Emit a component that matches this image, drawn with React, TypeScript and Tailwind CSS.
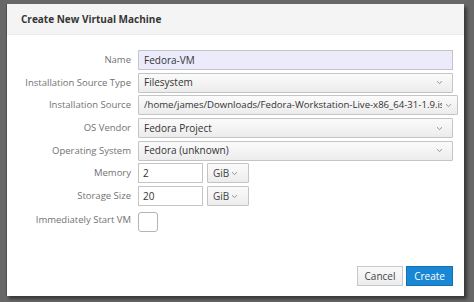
import React from "react";

const font = { fontFamily: '"Open Sans", "Noto Sans", sans-serif' };

function Chevron() {
  return (
    <svg width="7" height="5" viewBox="0 0 7 5" className="shrink-0">
      <path d="M1 1.2 L3.5 3.6 L6 1.2" fill="none" stroke="#8a8a8a" strokeWidth="0.9" />
    </svg>
  );
}

function Select({ value }: { value: string }) {
  return (
    <div className="h-[20px] flex items-center justify-between gap-[4px] pl-[5px] pr-[9px] border border-[#c4c4c4] rounded-[1px] bg-gradient-to-b from-[#fbfbfb] to-[#ececec] text-[10px] text-[#333] overflow-hidden">
      <span className="whitespace-nowrap overflow-hidden">{value}</span>
      <Chevron />
    </div>
  );
}

function Row({ label, children, className = "" }: { label: string; children: React.ReactNode; className?: string }) {
  return (
    <div className={"flex items-center " + className}>
      <div className="w-[124px] text-right text-[9.5px] text-[#727272] whitespace-nowrap">{label}</div>
      <div className="ml-[7px] flex-1 min-w-0">{children}</div>
    </div>
  );
}

function SizeRow({ label, value }: { label: string; value: string }) {
  return (
    <Row label={label}>
      <div className="flex gap-[4px]">
        <div className="w-[65px] h-[20px] flex items-center pl-[4px] border border-[#c4c4c4] bg-white text-[10px] text-[#333]">{value}</div>
        <div className="w-[42px] h-[20px] flex items-center gap-[2px] pl-[5px] border border-[#c4c4c4] rounded-[1px] bg-gradient-to-b from-[#fbfbfb] to-[#ececec] text-[10px] text-[#444]">
          GiB <Chevron />
        </div>
      </div>
    </Row>
  );
}

export default function App() {
  return (
    <div className="w-[474px] h-[302px] bg-[#676767] pl-[6px] pt-[4px] overflow-hidden" style={font}>
      <div className="w-[458px] h-[292px] bg-white flex flex-col shadow-[3px_3px_3px_rgba(0,0,0,0.45)] border-l border-[#4f4f4f]">
        <div className="h-[31px] bg-[#f4f4f4] border-b border-[#ececec] flex items-center pl-[14px] text-[10px] font-bold text-[#363636]">
          Create New Virtual Machine
        </div>
        <div className="flex flex-col pt-[15px] pr-[11px] gap-[2.7px]">
          <Row label="Name">
            <div className="h-[20px] flex items-center pl-[5px] border border-[#c4c4c4] bg-[#ebebfc] text-[10px] text-[#333]">Fedora-VM</div>
          </Row>
          <Row label="Installation Source Type">
            <Select value="Filesystem" />
          </Row>
          <Row label="Installation Source">
            <div className="h-[20px] mr-[-5px] flex items-center justify-between gap-[3px] pl-[5px] pr-[5px] border border-[#c4c4c4] rounded-[1px] bg-gradient-to-b from-[#fbfbfb] to-[#ececec] text-[9.6px] text-[#333] overflow-hidden">
              <span className="whitespace-nowrap overflow-hidden">/home/james/Downloads/Fedora-Workstation-Live-x86_64-31-1.9.iso</span>
              <Chevron />
            </div>
          </Row>
          <Row label="OS Vendor">
            <Select value="Fedora Project" />
          </Row>
          <Row label="Operating System">
            <Select value="Fedora (unknown)" />
          </Row>
          <SizeRow label="Memory" value="2" />
          <SizeRow label="Storage Size" value="20" />
          <div className="flex items-start mt-[3px]">
            <div className="w-[124px] text-right text-[9.5px] text-[#727272] pt-[1px] whitespace-nowrap">Immediately Start VM</div>
            <div className="ml-[7px] w-[20px] h-[20px] border border-[#b4b4b4] rounded-[3px] bg-white" />
          </div>
        </div>
        <div className="flex-1" />
        <div className="flex justify-end gap-[3px] pr-[11px] pb-[10px]">
          <div className="w-[46px] h-[20px] flex items-center justify-center border border-[#c8c8c8] bg-gradient-to-b from-[#fafafa] to-[#ececec] text-[10px] text-[#444]">Cancel</div>
          <div className="w-[47px] h-[20px] flex items-center justify-center border border-[#1172b8] bg-[#1a87d4] text-[10px] text-white">Create</div>
        </div>
      </div>
    </div>
  );
}
